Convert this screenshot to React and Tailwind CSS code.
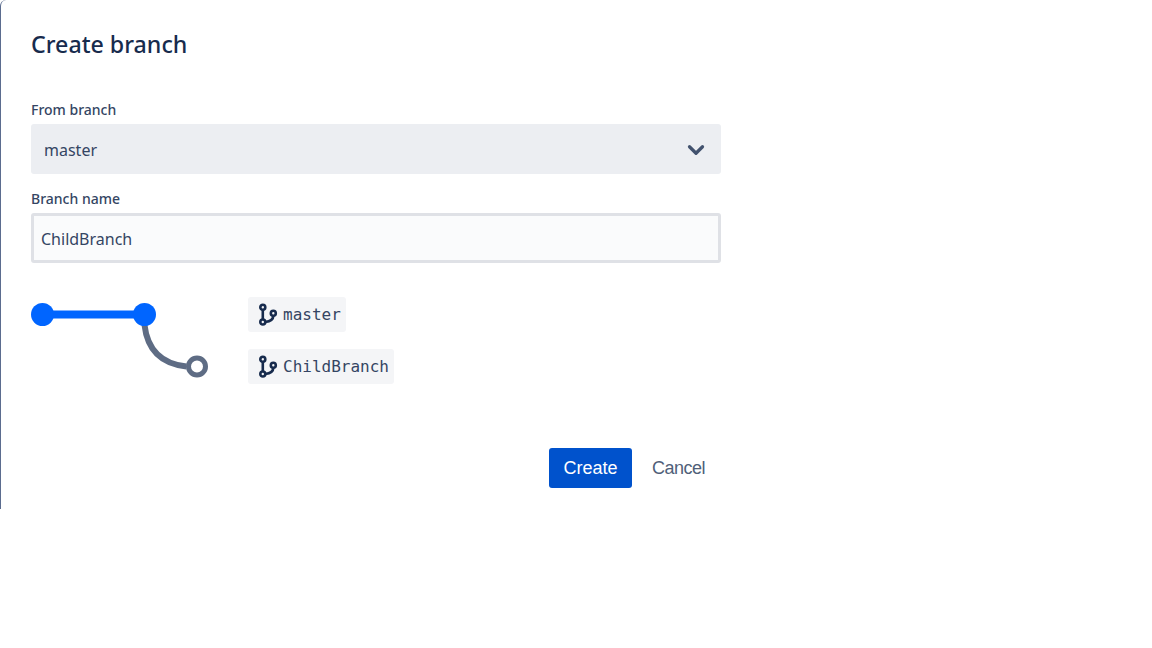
import { ChevronDown } from "lucide-react";

const sans = "font-['Noto_Sans',sans-serif]";

function BranchIcon() {
  return (
    <svg width="20" height="24" viewBox="0 0 20 24" fill="none" stroke="#172b4d" strokeWidth="2.600" className="shrink-0">
      <circle cx="4.800" cy="4.300" r="2.500" />
      <circle cx="4.800" cy="19" r="2.500" />
      <circle cx="15.300" cy="10.300" r="2.500" />
      <path d="M4.800 6.800v9.700M15.300 12.800c0 3.500-3.500 5.700-8 6.200" />
    </svg>
  );
}

function BranchTag({ name }) {
  return (
    <div className="flex h-[35px] w-fit items-center gap-[5px] rounded-[3px] bg-[#f4f5f7] pl-[10px] pr-[5px]">
      <BranchIcon />
      <span className="font-['DejaVu_Sans_Mono',monospace] text-[16px] text-[#344563]">{name}</span>
    </div>
  );
}

function BranchDiagram() {
  return (
    <svg width="180" height="90" viewBox="0 0 180 90" fill="none" className="shrink-0">
      <path d="M113.500 28c3 26 18 39 42 41.500" stroke="#5e6c84" strokeWidth="6" />
      <path d="M11.500 17.500h102" stroke="#0065ff" strokeWidth="8" />
      <circle cx="11.500" cy="17.500" r="11.500" fill="#0065ff" />
      <circle cx="113.500" cy="17.500" r="11.500" fill="#0065ff" />
      <circle cx="166" cy="69.500" r="8.500" fill="#fff" stroke="#5e6c84" strokeWidth="5" />
    </svg>
  );
}

export default function App() {
  return (
    <div className={`h-[648px] w-[1152px] overflow-hidden bg-white ${sans}`}>
      <div className="h-[509px] w-full rounded-tl-[6px] border-l border-[#5b6c8f] pl-[30px]">
        <div className="w-[690px]">
          <h1 className="pt-[28px] text-[23.2px] leading-[33px] font-medium text-[#172b4d]">Create branch</h1>

          <label className="mt-[39px] block text-[14px] leading-[20px] font-medium text-[#344563]">From branch</label>
          <div className="mt-[4px] flex h-[50px] items-center justify-between rounded-[3px] bg-[#eceef2] pt-[1px] pr-[12px] pl-[13px]">
            <span className="text-[16px] text-[#344563]">master</span>
            <ChevronDown size={26} strokeWidth={3} className="text-[#42526e]" />
          </div>

          <label className="mt-[15px] block text-[14px] leading-[20px] font-medium text-[#344563]">Branch name</label>
          <div className="mt-[4px] flex h-[50px] items-center rounded-[3px] border-[3px] border-[#dfe1e6] bg-[#fafbfc] pt-[2px] pl-[7px]">
            <span className="text-[16px] text-[#344563]">ChildBranch</span>
          </div>

          <div className="mt-[34px] flex">
            <BranchDiagram />
            <div className="ml-[37px] flex flex-col gap-[17px]">
              <BranchTag name="master" />
              <BranchTag name="ChildBranch" />
            </div>
          </div>

          <div className="mt-[61px] flex items-center justify-end pr-[16px] font-['Liberation_Sans',sans-serif] text-[18px]">
            <button className="h-[40px] w-[83px] rounded-[3px] bg-[#0052cc] text-white">Create</button>
            <button className="ml-[20px] tracking-[-0.5px] text-[#505f79]">Cancel</button>
          </div>
        </div>
      </div>
    </div>
  );
}
